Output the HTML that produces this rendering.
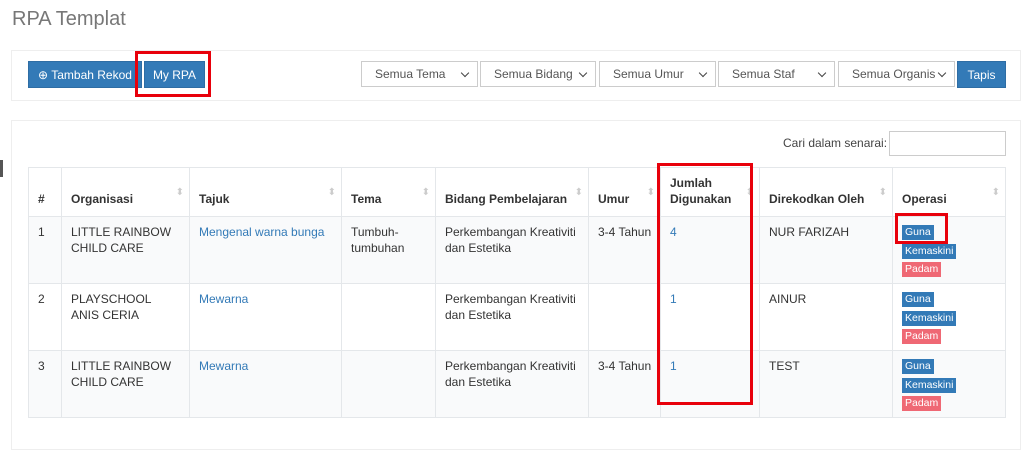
<!DOCTYPE html>
<html><head><meta charset="utf-8"><style>
*{box-sizing:border-box;margin:0;padding:0}
body{width:1024px;height:419px;overflow:hidden;background:#fff;font-family:"Liberation Sans",sans-serif;font-size:12px;color:#333;position:relative}
.a{position:absolute}
.btn{position:absolute;background:#337ab7;color:#fff;font-size:12px;text-align:center;line-height:26px;border:1px solid #2e6da4}
.sel{position:absolute;top:61px;height:26px;border:1px solid #ccc;background:#fff;color:#555;font-size:12px;line-height:24px;padding-left:13px}
.sel:after{content:"";position:absolute;right:9px;top:8px;width:5px;height:5px;border-right:1.5px solid #444;border-bottom:1.5px solid #444;transform:rotate(45deg)}
.red{position:absolute;border:3px solid #e8000b}
table{position:absolute;left:28px;top:167px;border-collapse:collapse;width:977px;table-layout:fixed}
td,th{border:1px solid #e4e7ea;vertical-align:top;padding:7px 9px 0;line-height:16px;text-align:left;overflow:hidden}
th{vertical-align:bottom;font-weight:bold;position:relative;color:#333;padding-bottom:9px}
tr.h{height:49px}
tr.r{height:67px}
th.s:after{content:"⬍";position:absolute;right:5px;top:17px;color:#ccc;font-size:10px;font-weight:normal}
tr.st td{background:#f9fafb}
a{color:#337ab7;text-decoration:none}
.b{display:block;width:max-content;font-size:10.5px;color:#fff;padding:0 3px;line-height:15px;margin-bottom:3.5px;background:#337ab7}
.b:first-child{margin-top:1px}
.p{background:#ef6874}
.nw{white-space:nowrap}
</style></head><body>
<div class="a" style="left:12px;top:8px;font-size:20px;color:#777">RPA Templat</div>
<div class="a" style="left:11px;top:50px;width:1010px;height:51px;border:1px solid #eee"></div>
<div class="btn" style="left:28px;top:61px;width:114px;height:27px">⊕ Tambah Rekod</div>
<div class="btn" style="left:144px;top:61px;width:61px;height:27px">My RPA</div>
<div class="red" style="left:135px;top:51px;width:76px;height:46px"></div>
<div class="sel" style="left:361px;width:117px">Semua Tema</div>
<div class="sel" style="left:480px;width:116px">Semua Bidang</div>
<div class="sel" style="left:599px;width:117px">Semua Umur</div>
<div class="sel" style="left:718px;width:117px">Semua Staf</div>
<div class="sel" style="left:838px;width:117px">Semua Organis</div>
<div class="btn" style="left:957px;top:61px;width:49px;height:27px">Tapis</div>
<div class="a" style="left:11px;top:120px;width:1010px;height:330px;border:1px solid #eee"></div>
<div class="a" style="left:0;top:160px;width:3px;height:17px;background:#555"></div>
<div class="a" style="left:783px;top:136px;color:#444">Cari dalam senarai:</div>
<div class="a" style="left:889px;top:131px;width:117px;height:25px;border:1px solid #ccc"></div>
<table>
<colgroup><col style="width:33px"><col style="width:128px"><col style="width:152px"><col style="width:94px"><col style="width:153px"><col style="width:72px"><col style="width:99px"><col style="width:133px"><col style="width:113px"></colgroup>
<tr class="h"><th>#</th><th class="s">Organisasi</th><th class="s">Tajuk</th><th class="s">Tema</th><th class="s">Bidang Pembelajaran</th><th class="s">Umur</th><th class="s">Jumlah<br>Digunakan</th><th class="s">Direkodkan Oleh</th><th class="s">Operasi</th></tr>
<tr class="r st"><td>1</td><td>LITTLE RAINBOW CHILD CARE</td><td><a>Mengenal warna bunga</a></td><td>Tumbuh-tumbuhan</td><td>Perkembangan Kreativiti dan Estetika</td><td class="nw">3-4 Tahun</td><td><a>4</a></td><td>NUR FARIZAH</td><td><span class="b">Guna</span><span class="b">Kemaskini</span><span class="b p">Padam</span></td></tr>
<tr class="r"><td>2</td><td>PLAYSCHOOL ANIS CERIA</td><td><a>Mewarna</a></td><td></td><td>Perkembangan Kreativiti dan Estetika</td><td></td><td><a>1</a></td><td>AINUR</td><td><span class="b">Guna</span><span class="b">Kemaskini</span><span class="b p">Padam</span></td></tr>
<tr class="r st"><td>3</td><td>LITTLE RAINBOW CHILD CARE</td><td><a>Mewarna</a></td><td></td><td>Perkembangan Kreativiti dan Estetika</td><td class="nw">3-4 Tahun</td><td><a>1</a></td><td>TEST</td><td><span class="b">Guna</span><span class="b">Kemaskini</span><span class="b p">Padam</span></td></tr>
</table>
<div class="red" style="left:657px;top:163px;width:96px;height:242px"></div>
<div class="red" style="left:895px;top:213px;width:53px;height:31px"></div>
</body></html>
